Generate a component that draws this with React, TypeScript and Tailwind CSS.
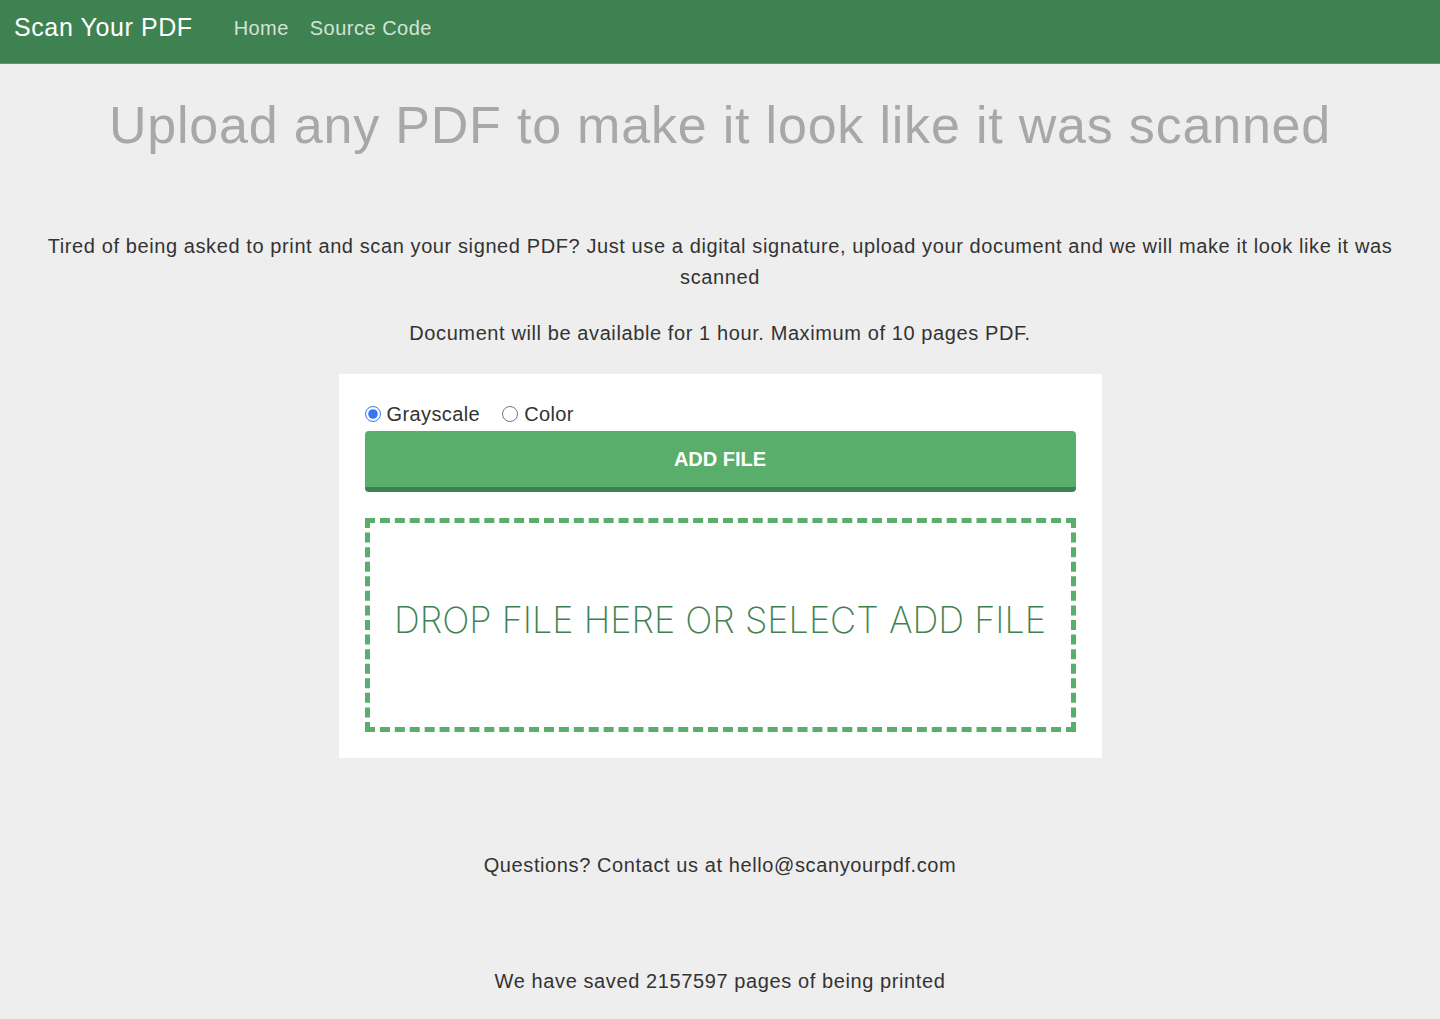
import React, { useState } from 'react';

const App: React.FC = () => {
  const [mode, setMode] = useState<'grayscale' | 'color'>('grayscale');

  return (
    <div className="min-h-screen bg-[#eeeeee] text-[#333333]" style={{ fontFamily: '"Liberation Sans", Arial, sans-serif' }}>
      {/* Navbar */}
      <nav className="h-[64px] bg-[#3e8251] border-b border-[#5b9a6a] flex items-center px-[14px] pb-[8px]">
        <span className="text-white text-[25px] tracking-[0.6px] mr-[41px]">Scan Your PDF</span>
        <a className="text-[#d5e3d8] text-[20px] tracking-[0.4px] mr-[21px]" href="#">Home</a>
        <a className="text-[#d5e3d8] text-[20px] tracking-[0.5px]" href="#">Source Code</a>
      </nav>

      <div className="px-[40px] text-center tracking-[0.6px]">
        <h1 className="text-[#a8a8a8] text-[52px] leading-none tracking-[0.8px] pt-[35px] pb-[80px]">
          Upload any PDF to make it look like it was scanned
        </h1>

        <p className="text-[20px] leading-[31px]">
          Tired of being asked to print and scan your signed PDF? Just use a digital signature, upload your document and we will make it look like it was scanned
        </p>
        <p className="text-[20px] leading-[31px] mt-[25px]">
          Document will be available for 1 hour. Maximum of 10 pages PDF.
        </p>
      </div>

      {/* Upload card */}
      <div className="mx-auto mt-[25px] w-[763px] bg-white px-[26px] pt-[25px] pb-[26px]">
        <div className="flex items-center text-[20px] tracking-[0.4px] h-[29px]">
          <label className="flex items-center gap-[6px] cursor-pointer">
            <input
              type="radio"
              name="mode"
              checked={mode === 'grayscale'}
              onChange={() => setMode('grayscale')}
              className="w-[16px] h-[16px] accent-[#3478f6]"
            />
            Grayscale
          </label>
          <label className="flex items-center gap-[6px] ml-[22px] cursor-pointer">
            <input
              type="radio"
              name="mode"
              checked={mode === 'color'}
              onChange={() => setMode('color')}
              className="w-[16px] h-[16px] accent-[#3478f6]"
            />
            Color
          </label>
        </div>

        <button className="mt-[3px] w-full h-[61px] bg-[#58ae6a] border-b-[5px] border-[#3e8251] rounded-[4px] text-white font-bold text-[20px]">
          ADD FILE
        </button>

        <div className="mt-[26px] h-[214px] border-[5px] border-dashed border-[#58ae6a] flex items-center justify-center pb-[10px]">
          <span
            className="text-[#3e8251] text-[36px] font-extralight"
            style={{ fontFamily: 'Inter, "Liberation Sans", sans-serif' }}
          >
            DROP FILE HERE OR SELECT ADD FILE
          </span>
        </div>
      </div>

      <div className="text-center text-[20px] tracking-[0.6px]">
        <p className="mt-[92px]">Questions? Contact us at hello@scanyourpdf.com</p>
        <p className="mt-[86px] pb-[24px]">We have saved 2157597 pages of being printed</p>
      </div>
    </div>
  );
};

export default App;
